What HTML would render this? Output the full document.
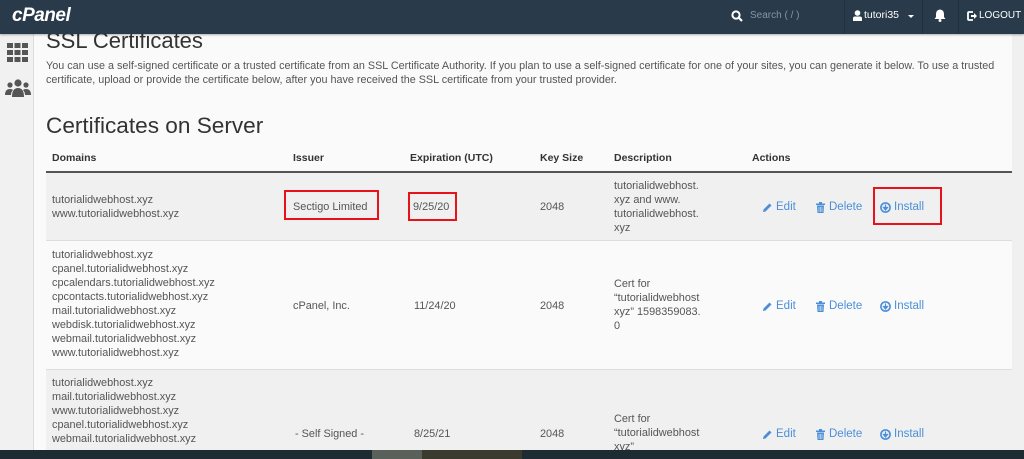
<!DOCTYPE html>
<html><head><style>
body{margin:0;width:1024px;height:459px;overflow:hidden;background:#fafafa;font-family:"Liberation Sans",sans-serif;color:#333;position:relative}
.a{position:absolute;white-space:nowrap}
.top{position:absolute;left:0;top:0;width:1024px;height:34px;background:#293a4a;box-shadow:0 1px 2px rgba(0,0,0,.3);z-index:3}
.side{position:absolute;left:0;top:34px;width:33px;height:416px;background:#f1f1f1;border-right:1px solid #ddd}
.t{font-size:10.9px;color:#555;line-height:14px}
.lnk{color:#4a8fd8;font-size:11.5px;line-height:14px;display:flex;align-items:center;gap:3px}
.box{position:absolute;border:2px solid #e8121b}
</style></head><body>
<div class="top">
 <div class="a" style="left:12px;top:5px;color:#fff;font-size:19px;font-weight:bold;font-style:italic;letter-spacing:-0.5px">cPanel</div>
 <svg class="a" style="left:731px;top:10px" width="12" height="12" viewBox="0 0 12 12"><circle cx="5" cy="5" r="3.6" fill="none" stroke="#fff" stroke-width="2"/><path d="M7.5 7.5L11 11" stroke="#fff" stroke-width="2.2"/></svg>
 <div class="a" style="left:750px;top:10px;color:#8795a3;font-size:10px">Search ( / )</div>
 <div class="a" style="left:844px;top:0;width:1px;height:34px;background:#22313f"></div>
 <svg class="a" style="left:853px;top:10px" width="9" height="11" viewBox="0 0 9 11"><circle cx="4.5" cy="3" r="2.8" fill="#fff"/><path d="M0 11V8.5Q0 6.5 2 6.5H7Q9 6.5 9 8.5V11Z" fill="#fff"/></svg>
 <div class="a" style="left:864px;top:9px;color:#fff;font-size:10.5px">tutori35</div>
 <div class="a" style="left:908px;top:15px;border:3px solid transparent;border-top:3px solid #fff"></div>
 <div class="a" style="left:922px;top:0;width:1px;height:34px;background:#22313f"></div>
 <svg class="a" style="left:934px;top:9px" width="12" height="13" viewBox="0 0 12 13"><path d="M6 0.5Q2 1 2 5V8L0.5 10H11.5L10 8V5Q10 1 6 .5Z" fill="#fff"/><circle cx="6" cy="11.5" r="1.5" fill="#fff"/></svg>
 <div class="a" style="left:958px;top:0;width:1px;height:34px;background:#22313f"></div>
 <svg class="a" style="left:967px;top:11px" width="10" height="10" viewBox="0 0 10 10"><path d="M6 1H2Q1 1 1 2V8Q1 9 2 9H6" fill="none" stroke="#fff" stroke-width="1.8"/><path d="M4 4H7V2L10 5L7 8V6H4Z" fill="#fff"/></svg>
 <div class="a" style="left:979px;top:10px;color:#fff;font-size:10px">LOGOUT</div>
</div>
<div class="side">
 <svg class="a" style="left:7px;top:9px" width="21" height="19" viewBox="0 0 21 19"><g fill="#555"><rect x="0" y="0" width="6" height="5"/><rect x="7.5" y="0" width="6" height="5"/><rect x="15" y="0" width="6" height="5"/><rect x="0" y="7" width="6" height="5"/><rect x="7.5" y="7" width="6" height="5"/><rect x="15" y="7" width="6" height="5"/><rect x="0" y="14" width="6" height="5"/><rect x="7.5" y="14" width="6" height="5"/><rect x="15" y="14" width="6" height="5"/></g></svg>
 <svg class="a" style="left:5px;top:45px" width="26" height="19" viewBox="0 0 26 19"><g fill="#555"><circle cx="13" cy="4" r="3.6"/><circle cx="5" cy="6" r="2.6"/><circle cx="21" cy="6" r="2.6"/><path d="M7 18Q7 9 13 9Q19 9 19 18Z"/><path d="M0 16Q0 10 5 10Q7 10 8 11Q6 13 6 16Z"/><path d="M26 16Q26 10 21 10Q19 10 18 11Q20 13 20 16Z"/></g></svg>
</div>
<div class="a" style="left:46px;top:28px;font-size:22px;color:#333">SSL Certificates</div>
<div class="a t" style="left:46px;top:59px;font-size:10.8px">You can use a self-signed certificate or a trusted certificate from an SSL Certificate Authority. If you plan to use a self-signed certificate for one of your sites, you can generate it below. To use a trusted<br>certificate, upload or provide the certificate below, after you have received the SSL certificate from your trusted provider.</div>
<div class="a" style="left:46px;top:113px;font-size:22.6px;color:#333">Certificates on Server</div>
<div class="a" style="left:46px;top:171px;width:966px;height:2px;background:#555"></div>
<div class="a" style="left:46px;top:173px;width:966px;height:67px;background:#f0f0f0;border-bottom:1px solid #ddd"></div>
<div class="a" style="left:46px;top:241px;width:966px;height:128px;background:#fafafa;border-bottom:1px solid #ddd"></div>
<div class="a" style="left:46px;top:370px;width:966px;height:80px;background:#f0f0f0"></div>
<div class="a" style="left:1012px;top:34px;width:12px;height:416px;background:#f0f0f0"></div>
<div style="font-size:10.5px;font-weight:bold;color:#333">
<div class="a" style="left:52px;top:152px">Domains</div>
<div class="a" style="left:293px;top:152px">Issuer</div>
<div class="a" style="left:410px;top:152px">Expiration (UTC)</div>
<div class="a" style="left:540px;top:152px">Key Size</div>
<div class="a" style="left:614px;top:152px">Description</div>
<div class="a" style="left:752px;top:152px">Actions</div>
</div>
<div class="a t" style="left:52px;top:193px">tutorialidwebhost.xyz<br>www.tutorialidwebhost.xyz</div>
<div class="a t" style="left:293px;top:200px">Sectigo Limited</div>
<div class="a t" style="left:413px;top:200px">9/25/20</div>
<div class="a t" style="left:540px;top:200px">2048</div>
<div class="a t" style="left:614px;top:179px">tutorialidwebhost.<br>xyz and www.<br>tutorialidwebhost.<br>xyz</div>
<div class="a t" style="left:52px;top:248px">tutorialidwebhost.xyz<br>cpanel.tutorialidwebhost.xyz<br>cpcalendars.tutorialidwebhost.xyz<br>cpcontacts.tutorialidwebhost.xyz<br>mail.tutorialidwebhost.xyz<br>webdisk.tutorialidwebhost.xyz<br>webmail.tutorialidwebhost.xyz<br>www.tutorialidwebhost.xyz</div>
<div class="a t" style="left:293px;top:299px">cPanel, Inc.</div>
<div class="a t" style="left:414px;top:299px">11/24/20</div>
<div class="a t" style="left:540px;top:299px">2048</div>
<div class="a t" style="left:614px;top:277px">Cert for<br>“tutorialidwebhost<br>xyz” 1598359083.<br>0</div>
<div class="a t" style="left:52px;top:376px">tutorialidwebhost.xyz<br>mail.tutorialidwebhost.xyz<br>www.tutorialidwebhost.xyz<br>cpanel.tutorialidwebhost.xyz<br>webmail.tutorialidwebhost.xyz</div>
<div class="a t" style="left:295px;top:427px">- Self Signed -</div>
<div class="a t" style="left:414px;top:427px">8/25/21</div>
<div class="a t" style="left:540px;top:427px">2048</div>
<div class="a t" style="left:614px;top:412px">Cert for<br>“tutorialidwebhost<br>xyz”</div>

<svg width="0" height="0" style="position:absolute"><defs>
<g id="pen"><path d="M1 10L1.5 7.5L7.5 1.5L9.5 3.5L3.5 9.5Z" fill="#4a8fd8"/></g>
<g id="bin"><rect x="1" y="1.5" width="9" height="1.5" fill="#4a8fd8"/><rect x="4" y="0" width="3" height="1.5" fill="#4a8fd8"/><path d="M2 3.5H9L8.5 11H2.5Z" fill="#4a8fd8"/><path d="M4 5V10M5.5 5V10M7 5V10" stroke="#f0f0f0" stroke-width=".6"/></g>
<g id="dl"><circle cx="5.5" cy="5.5" r="4.6" fill="none" stroke="#4a8fd8" stroke-width="1.6"/><path d="M5.5 2.5V7M3.5 5.5L5.5 8L7.5 5.5Z" stroke="#4a8fd8" fill="#4a8fd8" stroke-width="1.2"/></g>
</defs></svg>

<div class="a lnk" style="left:762px;top:200px"><svg width="11" height="11"><use href="#pen"/></svg>Edit</div>
<div class="a lnk" style="left:815px;top:200px"><svg width="11" height="11"><use href="#bin"/></svg>Delete</div>
<div class="a lnk" style="left:880px;top:200px"><svg width="11" height="11"><use href="#dl"/></svg>Install</div>
<div class="a lnk" style="left:762px;top:299px"><svg width="11" height="11"><use href="#pen"/></svg>Edit</div>
<div class="a lnk" style="left:815px;top:299px"><svg width="11" height="11"><use href="#bin"/></svg>Delete</div>
<div class="a lnk" style="left:880px;top:299px"><svg width="11" height="11"><use href="#dl"/></svg>Install</div>
<div class="a lnk" style="left:762px;top:427px"><svg width="11" height="11"><use href="#pen"/></svg>Edit</div>
<div class="a lnk" style="left:815px;top:427px"><svg width="11" height="11"><use href="#bin"/></svg>Delete</div>
<div class="a lnk" style="left:880px;top:427px"><svg width="11" height="11"><use href="#dl"/></svg>Install</div>
<div class="box" style="left:284px;top:190px;width:91px;height:26px"></div>
<div class="box" style="left:408px;top:192px;width:45px;height:25px"></div>
<div class="box" style="left:873px;top:187px;width:65px;height:34px"></div>
<div class="a" style="left:0;top:450px;width:1024px;height:9px;background:#1d2b33"></div>
<div class="a" style="left:372px;top:450px;width:50px;height:9px;background:#5a605a"></div>
<div class="a" style="left:422px;top:450px;width:100px;height:9px;background:#3a3a2e"></div>
</body></html>
